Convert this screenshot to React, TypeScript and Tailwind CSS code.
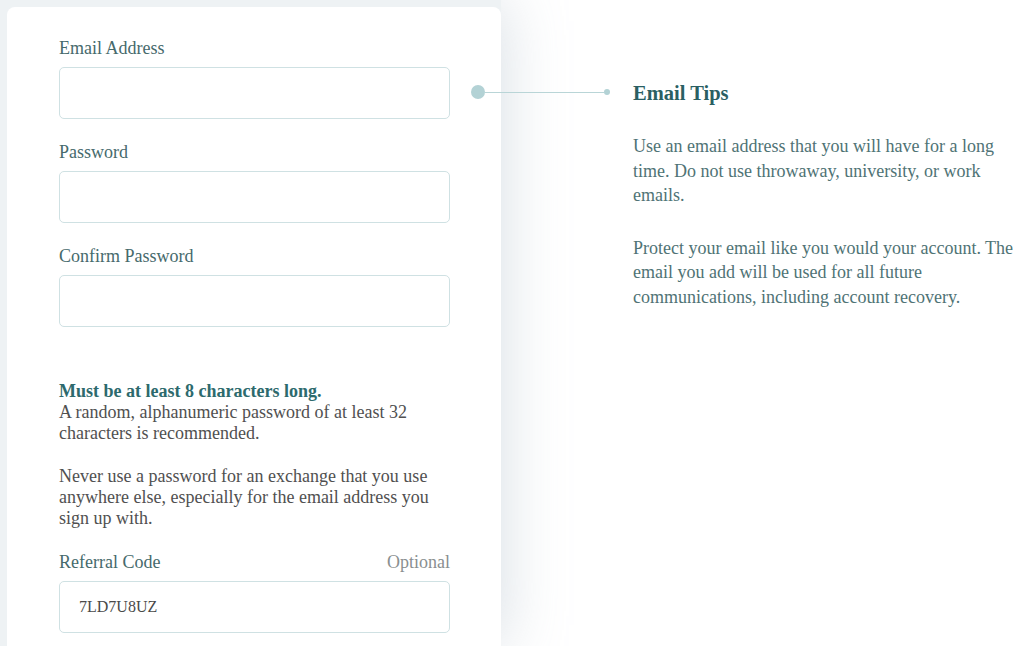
import React from 'react';

const serif = { fontFamily: '"Liberation Serif", "Times New Roman", serif' };

function Field({ label, value, optional }: { label: string; value?: string; optional?: boolean }) {
  return (
    <div>
      <div className="flex items-center justify-between h-[24px]">
        <span className="text-[18px] text-[#466a6c]">{label}</span>
        {optional && <span className="text-[18px] text-[#8a8f90]">Optional</span>}
      </div>
      <div className="mt-[7px] h-[52px] rounded-[5px] border border-[#cfe1e3] bg-white flex items-center px-[19px] text-[16px] text-[#4a4a4a]">
        {value}
      </div>
    </div>
  );
}

export default function App() {
  return (
    <div className="h-[646px] w-[1024px] overflow-hidden bg-white flex" style={serif}>
      <div className="w-[501px] shrink-0 bg-[#eef2f4] pl-[7px] pt-[7px] shadow-[0_0_60px_rgba(165,180,192,0.45)] relative z-0">
        <div className="h-full bg-white rounded-t-[8px] pl-[52px] pr-[51px] pt-[29px]">
          <div className="flex flex-col gap-[21px]">
            <Field label="Email Address" />
            <Field label="Password" />
            <Field label="Confirm Password" />
          </div>

          <div className="mt-[54px] text-[18px] leading-[21px] text-[#505050]">
            <p className="font-bold text-[#2d6a6d]">Must be at least 8 characters long.</p>
            <p>A random, alphanumeric password of at least 32 characters is recommended.</p>
          </div>
          <p className="mt-[22px] text-[18px] leading-[21px] text-[#505050]">
            Never use a password for an exchange that you use anywhere else, especially for the email address you sign up with.
          </p>

          <div className="mt-[21px]">
            <Field label="Referral Code" value="7LD7U8UZ" optional />
          </div>
        </div>
      </div>

      <div className="flex-1 relative z-10 flex items-start pt-[79px]">
        <div className="ml-[-30px] mt-[6px] flex items-center w-[139px] shrink-0">
          <span className="h-[14px] w-[14px] rounded-full bg-[#b3d2d5] shrink-0" />
          <span className="h-px flex-1 bg-[#b9d5d7]" />
          <span className="h-[6px] w-[6px] rounded-full bg-[#b3d2d5] shrink-0" />
        </div>
        <div className="ml-[23px] w-[390px]">
          <h2 className="text-[20.5px] leading-[28px] font-bold text-[#2a5f63]">Email Tips</h2>
          <p className="mt-[27px] text-[18px] leading-[24.5px] text-[#4f7375]">
            Use an email address that you will have for a long time. Do not use throwaway, university, or work emails.
          </p>
          <p className="mt-[28px] text-[18px] leading-[24.5px] text-[#4f7375]">
            Protect your email like you would your account. The email you add will be used for all future communications, including account recovery.
          </p>
        </div>
      </div>
    </div>
  );
}
